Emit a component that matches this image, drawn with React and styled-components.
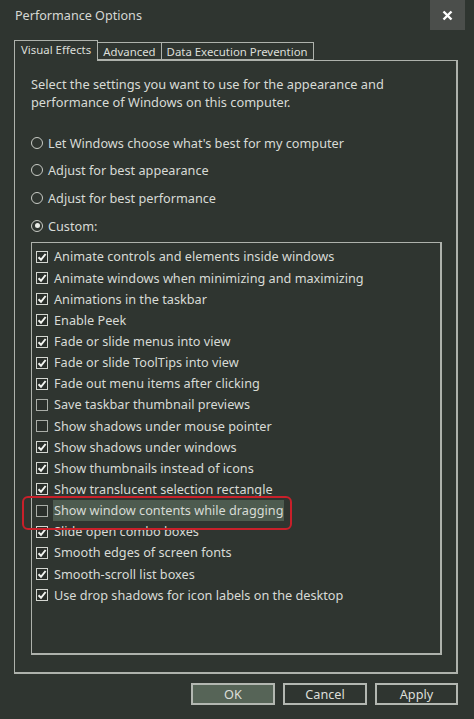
import React from "react";
import styled, { createGlobalStyle } from "styled-components";

const Global = createGlobalStyle`
  html, body { margin: 0; padding: 0; background: #2f3530; }
  body { font-family: "Noto Sans", "Open Sans", sans-serif; color: #d8dbd6; }
`;

const Window = styled.div`
  width: 474px;
  height: 719px;
  background: #2f3530;
  display: flex;
  flex-direction: column;
  box-sizing: border-box;
  overflow: hidden;
`;

const TitleBar = styled.div`
  height: 30px;
  display: flex;
  align-items: center;
  justify-content: space-between;
  padding-left: 15px;
  padding-right: 9px;
`;

const Title = styled.div`
  font-size: 12.6px;
  color: #d6d8d4;
  padding-top: 1px;
`;

const CloseButton = styled.div`
  width: 35px;
  height: 30px;
  background: #4b4e4b;
  display: flex;
  align-items: center;
  justify-content: center;
  align-self: flex-start;
`;

const Tabs = styled.div`
  display: flex;
  align-items: flex-end;
  margin: 9px 0 0 14px;
  height: 21px;
`;

const Tab = styled.div`
  box-sizing: border-box;
  height: ${(p) => (p.$active ? "21px" : "18px")};
  padding: ${(p) => (p.$active ? "0 6px" : "0 5px")};
  border: 1px solid #aeb2ac;
  border-bottom: ${(p) => (p.$active ? "none" : "1px solid #aeb2ac")};
  margin-left: ${(p) => (p.$first ? "0" : "-1px")};
  font-size: 11.4px;
  display: flex;
  align-items: ${(p) => (p.$active ? "flex-start" : "center")};
  padding-top: ${(p) => (p.$active ? "1px" : "0")};
  color: #dcdfd9;
  background: #2f3530;
  position: relative;
  z-index: ${(p) => (p.$active ? 2 : 1)};
  margin-bottom: ${(p) => (p.$active ? "-1px" : "0")};
`;

const Panel = styled.div`
  box-sizing: border-box;
  margin: 0 16px 0 14px;
  height: 614px;
  border: 1px solid #aeb2ac;
  border-right-width: 2px;
  border-bottom-width: 2px;
  padding: 14px 15px 0 16px;
  display: flex;
  flex-direction: column;
`;

const Description = styled.p`
  margin: 0;
  font-size: 12.8px;
  line-height: 18px;
  color: #d8dbd6;
`;

const Radios = styled.div`
  display: flex;
  flex-direction: column;
  margin-top: 18px;
`;

const RadioRow = styled.div`
  display: flex;
  align-items: center;
  height: 27.6px;
  font-size: 12.7px;
  gap: 5px;
`;

const RadioCircle = styled.span`
  box-sizing: border-box;
  width: 12px;
  height: 12px;
  border-radius: 50%;
  border: 1.5px solid #c9ccc6;
  display: flex;
  align-items: center;
  justify-content: center;
  &::after {
    content: "";
    width: 5px;
    height: 5px;
    border-radius: 50%;
    background: ${(p) => (p.$checked ? "#e8ebe6" : "transparent")};
  }
`;

const ListBox = styled.div`
  box-sizing: border-box;
  margin-top: 3px;
  width: 411px;
  height: 413px;
  border: 2px solid #aeb2ac;
  border-top-width: 1px;
  border-left-width: 1px;
  padding: 3px 0 0 4px;
  display: flex;
  flex-direction: column;
  position: relative;
`;

const CheckRow = styled.div`
  display: flex;
  align-items: center;
  height: 21.15px;
  gap: 5px;
  font-size: 12.7px;
  color: #d8dbd6;
`;

const Box = styled.span`
  box-sizing: border-box;
  width: 12px;
  height: 12px;
  flex: none;
  border: 1px solid ${(p) => (p.$checked ? "#d4d7d1" : "#a9ada7")};
  background: #2a2f2b;
  display: flex;
  align-items: center;
  justify-content: center;
`;

const Label = styled.span`
  padding: 0 1px;
  background: ${(p) => (p.$selected ? "#4d5b4f" : "transparent")};
  line-height: 21px;
`;

const Highlight = styled.div`
  position: absolute;
  left: -10px;
  top: 253px;
  width: 270px;
  height: 34px;
  border: 2px solid #c8202a;
  border-radius: 6px;
  box-sizing: border-box;
  pointer-events: none;
`;

const Buttons = styled.div`
  display: flex;
  justify-content: flex-end;
  gap: 8px;
  margin: 9px 16px 0 0;
`;

const Button = styled.div`
  box-sizing: border-box;
  width: ${(p) => (p.$wide ? "83px" : "84px")};
  height: 22px;
  border: 2px solid #b3b7b1;
  background: ${(p) => (p.$primary ? "#566457" : "#2f3530")};
  display: flex;
  align-items: center;
  justify-content: center;
  font-size: 12.7px;
  color: #dcdfd9;
`;

const Check = () => (
  <svg width="10" height="10" viewBox="0 0 10 10">
    <path d="M1.5 5.2 L4 7.8 L8.6 2" fill="none" stroke="#f2f4f0" strokeWidth="2" />
  </svg>
);

const items = [
  ["Animate controls and elements inside windows", true],
  ["Animate windows when minimizing and maximizing", true],
  ["Animations in the taskbar", true],
  ["Enable Peek", true],
  ["Fade or slide menus into view", true],
  ["Fade or slide ToolTips into view", true],
  ["Fade out menu items after clicking", true],
  ["Save taskbar thumbnail previews", false],
  ["Show shadows under mouse pointer", false],
  ["Show shadows under windows", true],
  ["Show thumbnails instead of icons", true],
  ["Show translucent selection rectangle", true],
  ["Show window contents while dragging", false, true],
  ["Slide open combo boxes", true],
  ["Smooth edges of screen fonts", true],
  ["Smooth-scroll list boxes", true],
  ["Use drop shadows for icon labels on the desktop", true],
];

const radios = [
  ["Let Windows choose what's best for my computer", false],
  ["Adjust for best appearance", false],
  ["Adjust for best performance", false],
  ["Custom:", true],
];

export default function App() {
  return (
    <>
      <Global />
      <Window>
        <TitleBar>
          <Title>Performance Options</Title>
          <CloseButton>
            <svg width="11" height="11" viewBox="0 0 11 11">
              <path d="M1.5 1.5 L9.5 9.5 M9.5 1.5 L1.5 9.5" stroke="#ffffff" strokeWidth="2.4" />
            </svg>
          </CloseButton>
        </TitleBar>
        <Tabs>
          <Tab $active $first>Visual Effects</Tab>
          <Tab>Advanced</Tab>
          <Tab>Data Execution Prevention</Tab>
        </Tabs>
        <Panel>
          <Description>
            Select the settings you want to use for the appearance and
            <br />
            performance of Windows on this computer.
          </Description>
          <Radios>
            {radios.map(([t, c]) => (
              <RadioRow key={t}>
                <RadioCircle $checked={c} />
                <span>{t}</span>
              </RadioRow>
            ))}
          </Radios>
          <ListBox>
            {items.map(([t, c, sel]) => (
              <CheckRow key={t}>
                <Box $checked={c}>{c && <Check />}</Box>
                <Label $selected={sel}>{t}</Label>
              </CheckRow>
            ))}
            <Highlight />
          </ListBox>
        </Panel>
        <Buttons>
          <Button $primary>OK</Button>
          <Button>Cancel</Button>
          <Button $wide>Apply</Button>
        </Buttons>
      </Window>
    </>
  );
}
